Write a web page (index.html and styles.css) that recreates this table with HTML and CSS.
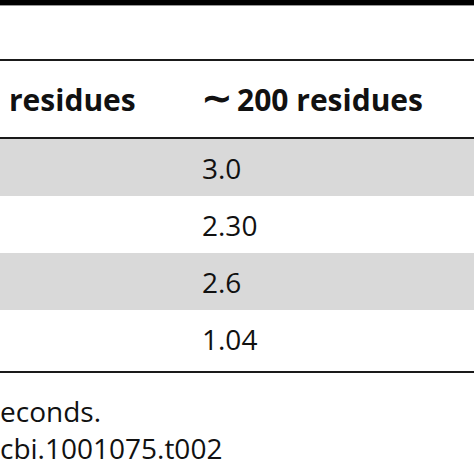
FILE: index.html
```html
<!DOCTYPE html>
<html>
<head>
<meta charset="utf-8">
<link rel="stylesheet" href="styles.css">
</head>
<body>
<div class="sheet">
  <div class="topbar"></div>
  <div class="caption-gap"></div>
  <div class="table">
    <div class="row head">
      <div class="cell">residues</div>
      <div class="cell"><span class="tilde">∼</span>200 residues</div>
    </div>
    <div class="row shade">
      <div class="cell"></div>
      <div class="cell">3.0</div>
    </div>
    <div class="row">
      <div class="cell"></div>
      <div class="cell">2.30</div>
    </div>
    <div class="row shade">
      <div class="cell"></div>
      <div class="cell">2.6</div>
    </div>
    <div class="row last">
      <div class="cell"></div>
      <div class="cell">1.04</div>
    </div>
  </div>
  <div class="notes">
    <p class="note">econds.</p>
    <p class="note">cbi.1001075.t002</p>
  </div>
</div>
</body>
</html>
```
FILE: styles.css
```css
html, body {
  margin: 0;
  padding: 0;
  background: #fff;
}
.sheet {
  width: 474px;
  height: 474px;
  overflow: hidden;
  font-family: "Open Sans", "Noto Sans", sans-serif;
  color: #111;
}
.topbar {
  height: 5px;
  background: #000;
  border-bottom: 1px solid #999;
}
.caption-gap {
  height: 53px;
}
.table {
  border-top: 2px solid #1a1a1a;
  border-bottom: 2px solid #1a1a1a;
}
.row {
  display: grid;
  grid-template-columns: 202px 1fr;
  height: 57px;
  align-items: center;
  font-size: 28px;
}
.row.head {
  height: 76px;
  font-size: 30px;
  font-weight: 700;
  border-bottom: 2px solid #1a1a1a;
}
.row.head .cell:first-child {
  padding-left: 9px;
}
.tilde {
  display: inline-block;
  width: 36px;
  margin-left: -1px;
  font-family: "DejaVu Sans", sans-serif;
  font-size: 38px;
  font-weight: 700;
  line-height: 1;
}
.row.shade {
  background: #d9d9d9;
}
.row.last {
  height: 57px;
  padding-bottom: 4px;
}
.notes {
  padding-top: 20px;
}
.note {
  margin: 0;
  font-size: 28px;
  line-height: 37px;
}
```
